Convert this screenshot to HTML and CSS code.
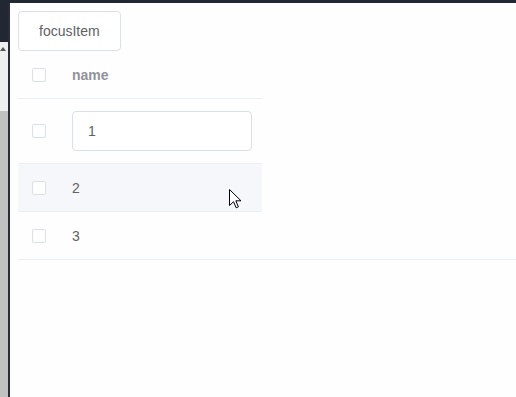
FILE: index.html
```html
<!DOCTYPE html>
<html>
<head>
<meta charset="utf-8">
<link rel="stylesheet" href="styles.css">
</head>
<body>
<div class="topbar"></div>
<div class="layout">
  <div class="side">
    <div class="side-dark"></div>
    <div class="side-light"><span class="tri"></span></div>
    <div class="side-gray"></div>
  </div>
  <div class="side-line"></div>
  <main class="main">
    <button class="btn">focusItem</button>
    <div class="table">
      <div class="row head">
        <div class="c1"><span class="cb"></span></div>
        <div class="c2 th">name</div>
      </div>
      <div class="row r1">
        <div class="c1"><span class="cb"></span></div>
        <div class="c2"><div class="input">1</div></div>
      </div>
      <div class="row r2 hover">
        <div class="c1"><span class="cb"></span></div>
        <div class="c2">2</div>
      </div>
      <div class="row r3">
        <div class="c1"><span class="cb"></span></div>
        <div class="c2">3</div>
      </div>
    </div>
  </main>
</div>
<svg class="cursor" width="13" height="20" viewBox="0 0 13 20">
  <path d="M0.5 0.5 L0.5 16.5 L4.5 12.7 L7.2 18.8 L9.4 17.8 L6.8 11.8 L12 11.8 Z" fill="#fff" stroke="#000" stroke-width="1"/>
</svg>
</body>
</html>
```
FILE: styles.css
```css
html, body {
  margin: 0;
  padding: 0;
  background: #fefefe;
  font-family: "Liberation Sans", Arial, sans-serif;
  font-size: 14px;
  color: #606266;
  overflow: hidden;
  height: 397px;
}
.topbar {
  height: 3px;
  background: #222833;
}
.layout {
  display: flex;
  height: 394px;
}
.side {
  width: 8px;
  display: flex;
  flex-direction: column;
}
.side-dark {
  height: 39px;
  background: #222833;
}
.side-light {
  height: 69px;
  background: #efefef;
  position: relative;
}
.tri {
  position: absolute;
  left: 0;
  top: 5px;
  width: 0;
  height: 0;
  border-left: 3px solid transparent;
  border-right: 3px solid transparent;
  border-bottom: 4px solid #555;
}
.side-gray {
  flex: 1;
  background: #c1c1c1;
}
.side-line {
  width: 2px;
  background: #2a2d33;
}
.main {
  flex: 1;
  padding: 8px 0 0 8px;
}
.btn {
  display: block;
  height: 40px;
  padding: 0 20px;
  border: 1px solid #dcdfe6;
  border-radius: 4px;
  background: #fff;
  color: #606266;
  font-family: "Liberation Sans", Arial, sans-serif;
  font-size: 14px;
}
.table {
  border-bottom: 1px solid #ebeef5;
}
.row {
  display: flex;
  width: 244px;
  align-items: center;
  border-bottom: 1px solid #ebeef5;
}
.row.r3 {
  border-bottom: none;
}
.head { height: 47px; }
.r1 { height: 64px; }
.r2 { height: 47px; }
.r3 { height: 47px; }
.hover { background: #f5f7fa; }
.c1 {
  width: 40px;
  padding-left: 14px;
  display: flex;
  align-items: center;
}
.c2 {
  flex: 1;
  padding-right: 10px;
}
.th {
  font-weight: bold;
  color: #909399;
}
.cb {
  display: block;
  width: 12px;
  height: 12px;
  border: 1px solid #dcdfe6;
  border-radius: 2px;
  background: #fff;
}
.input {
  height: 38px;
  line-height: 38px;
  border: 1px solid #dcdfe6;
  border-radius: 4px;
  background: #fff;
  padding-left: 15px;
  color: #606266;
}
.cursor {
  position: absolute;
  left: 229px;
  top: 189px;
}
```
